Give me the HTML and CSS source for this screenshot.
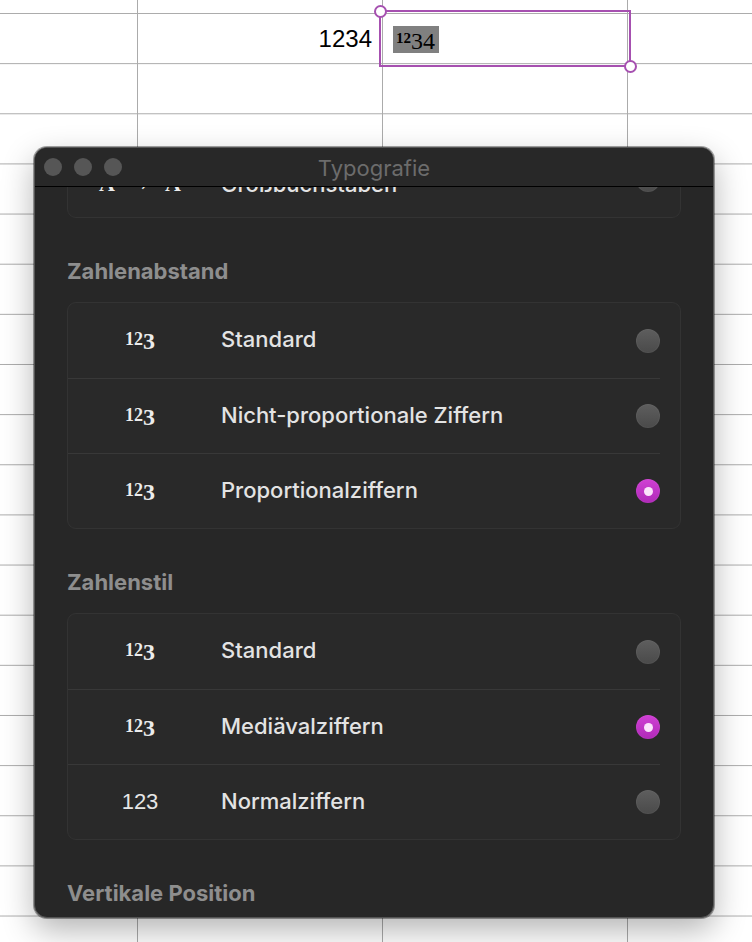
FILE: index.html
```html
<!DOCTYPE html>
<html lang="de">
<head>
  <meta charset="UTF-8" />
  <meta name="viewport" content="width=device-width, initial-scale=1.0"/>
  <title>Typografie</title>
  <link rel="stylesheet" href="styles.css">
</head>
<body>

<div class="sheet">
  <div class="sheet-row">
    <div class="cell cell-num">1234</div>
    <div class="cell cell-selected">
      <span class="hl"><span class="hl-small">12</span>34</span>
      <div class="selection">
        <i class="handle handle-tl"></i>
        <i class="handle handle-br"></i>
      </div>
    </div>
  </div>
</div>

<div class="panel">
  <div class="titlebar">
    <div class="lights"><i></i><i></i><i></i></div>
    <div class="title">Typografie</div>
  </div>

  <div class="panel-body">
    <div class="card card-scrolled">
      <div class="opt">
        <div class="opt-icon caps">A <span class="arrow">&rarr;</span> A</div>
        <div class="opt-label">Großbuchstaben</div>
        <div class="radio"></div>
      </div>
    </div>

    <h3 class="section">Zahlenabstand</h3>
    <div class="card">
      <div class="opt">
        <div class="opt-icon"><span class="osf">12<span class="osf-d">3</span></span></div>
        <div class="opt-label">Standard</div>
        <div class="radio"></div>
      </div>
      <div class="opt">
        <div class="opt-icon"><span class="osf">12<span class="osf-d">3</span></span></div>
        <div class="opt-label">Nicht-proportionale Ziffern</div>
        <div class="radio"></div>
      </div>
      <div class="opt">
        <div class="opt-icon"><span class="osf">12<span class="osf-d">3</span></span></div>
        <div class="opt-label">Proportionalziffern</div>
        <div class="radio on"></div>
      </div>
    </div>

    <h3 class="section">Zahlenstil</h3>
    <div class="card">
      <div class="opt">
        <div class="opt-icon"><span class="osf">12<span class="osf-d">3</span></span></div>
        <div class="opt-label">Standard</div>
        <div class="radio"></div>
      </div>
      <div class="opt">
        <div class="opt-icon"><span class="osf">12<span class="osf-d">3</span></span></div>
        <div class="opt-label">Mediävalziffern</div>
        <div class="radio on"></div>
      </div>
      <div class="opt">
        <div class="opt-icon lining">123</div>
        <div class="opt-label">Normalziffern</div>
        <div class="radio"></div>
      </div>
    </div>

    <h3 class="section">Vertikale Position</h3>
  </div>
</div>

</body>
</html>
```

FILE: styles.css
```css
* { box-sizing: border-box; margin: 0; padding: 0; }
body {
  font-family: "Inter", "Noto Sans", sans-serif;
  background: #fff;
  width: 752px;
  height: 942px;
  overflow: hidden;
  position: relative;
}

/* spreadsheet behind the panel */
.sheet {
  height: 942px;
  padding-top: 13px;
  background-image:
    linear-gradient(to right, #ababab 1px, transparent 1px),
    linear-gradient(to bottom, #ababab 1px, transparent 1px);
  background-size: 245px 100%, 100% 50.15px;
  background-position: 137px 0, 0 13px;
}
.sheet-row {
  display: flex;
  margin-left: 138px;
  height: 50px;
}
.cell {
  width: 245px;
  height: 50px;
  display: flex;
  align-items: center;
  position: relative;
}
.cell-num {
  justify-content: flex-end;
  padding: 2px 11px 0 0;
  font-family: "Liberation Sans", Arial, sans-serif;
  font-size: 24px;
  color: #000;
}
.cell-selected {
  padding: 2px 0 0 10px;
}
.hl {
  font-family: "Liberation Serif", serif;
  font-size: 24px;
  line-height: 24px;
  background: #808080;
  color: #000;
  padding: 0 4px 0 3px;
}
.hl-small {
  font-size: 15px;
  font-weight: bold;
  vertical-align: 6px;
}
.selection {
  position: absolute;
  left: -4px;
  top: -3px;
  right: -3px;
  bottom: -4px;
  border: 2px solid #a650b0;
}
.handle {
  position: absolute;
  width: 13px;
  height: 13px;
  border-radius: 50%;
  background: #fff;
  border: 2px solid #a650b0;
}
.handle-tl { left: -7.5px; top: -7.5px; }
.handle-br { right: -7.5px; bottom: -7.5px; }

/* floating Typografie panel */
.panel {
  position: absolute;
  left: 34px;
  top: 147px;
  width: 680px;
  height: 771px;
  background: #272727;
  border: 1px solid #555;
  border-radius: 13px;
  overflow: hidden;
  box-shadow: 0 0 0 1px rgba(0,0,0,0.35), 0 12px 32px rgba(0,0,0,0.3);
}
.titlebar {
  height: 39px;
  border-bottom: 1px solid #000;
  display: flex;
  align-items: center;
  justify-content: center;
  position: relative;
  background: #282828;
}
.lights {
  position: absolute;
  left: 9px;
  top: 10px;
  display: flex;
  gap: 12px;
}
.lights i {
  width: 18px;
  height: 18px;
  border-radius: 50%;
  background: #565656;
}
.title {
  color: #6c6c6c;
  font-size: 22px;
  padding-top: 1px;
}

.panel-body {
  padding: 0 32px;
  height: calc(100% - 39px);
  overflow: hidden;
}

.card {
  background: #292929;
  border: 1px solid #333;
  border-radius: 9px;
}
.card-scrolled {
  margin-top: -46px;
}

.opt {
  display: grid;
  grid-template-columns: 144px 1fr 24px;
  column-gap: 9px;
  align-items: center;
  height: 75px;
  margin-right: 20px;
  color: #e3e3e3;
}
.opt + .opt {
  border-top: 1px solid #383838;
}
.opt-icon {
  text-align: center;
  color: #ececec;
}
.opt-label {
  font-size: 22px;
  font-weight: 500;
  padding-bottom: 3px;
}

.osf {
  font-family: "Liberation Serif", serif;
  font-weight: bold;
  font-size: 18px;
  display: inline-block;
  padding-top: 1px;
}
.osf-d {
  font-size: 24px;
  vertical-align: -4px;
  line-height: 1;
}
.lining {
  font-family: "Liberation Sans", Arial, sans-serif;
  font-size: 22px;
  color: #e6e6e6;
}
.caps {
  font-family: "Liberation Serif", serif;
  font-weight: bold;
  font-size: 22px;
  padding-top: 8px;
}
.caps .arrow {
  font-family: "DejaVu Sans", sans-serif;
  font-weight: normal;
  font-size: 16px;
  margin: 0 14px;
}
.card-scrolled .opt-label {
  padding: 8px 0 0;
}

.radio {
  width: 24px;
  height: 24px;
  border-radius: 50%;
  background: linear-gradient(#5e5e5e, #4a4a4a);
  box-shadow: inset 0 0 0 1px rgba(255,255,255,0.04);
  position: relative;
}
.radio.on {
  background: linear-gradient(#d040d4, #b02ab8);
}
.radio.on::after {
  content: "";
  position: absolute;
  left: 7.5px;
  top: 7.5px;
  width: 9px;
  height: 9px;
  border-radius: 50%;
  background: #fbe2fb;
}

.section {
  margin: 39px 0 17px;
  height: 28px;
  line-height: 28px;
  font-size: 22px;
  font-weight: 700;
  color: #8e8e8e;
}
```
